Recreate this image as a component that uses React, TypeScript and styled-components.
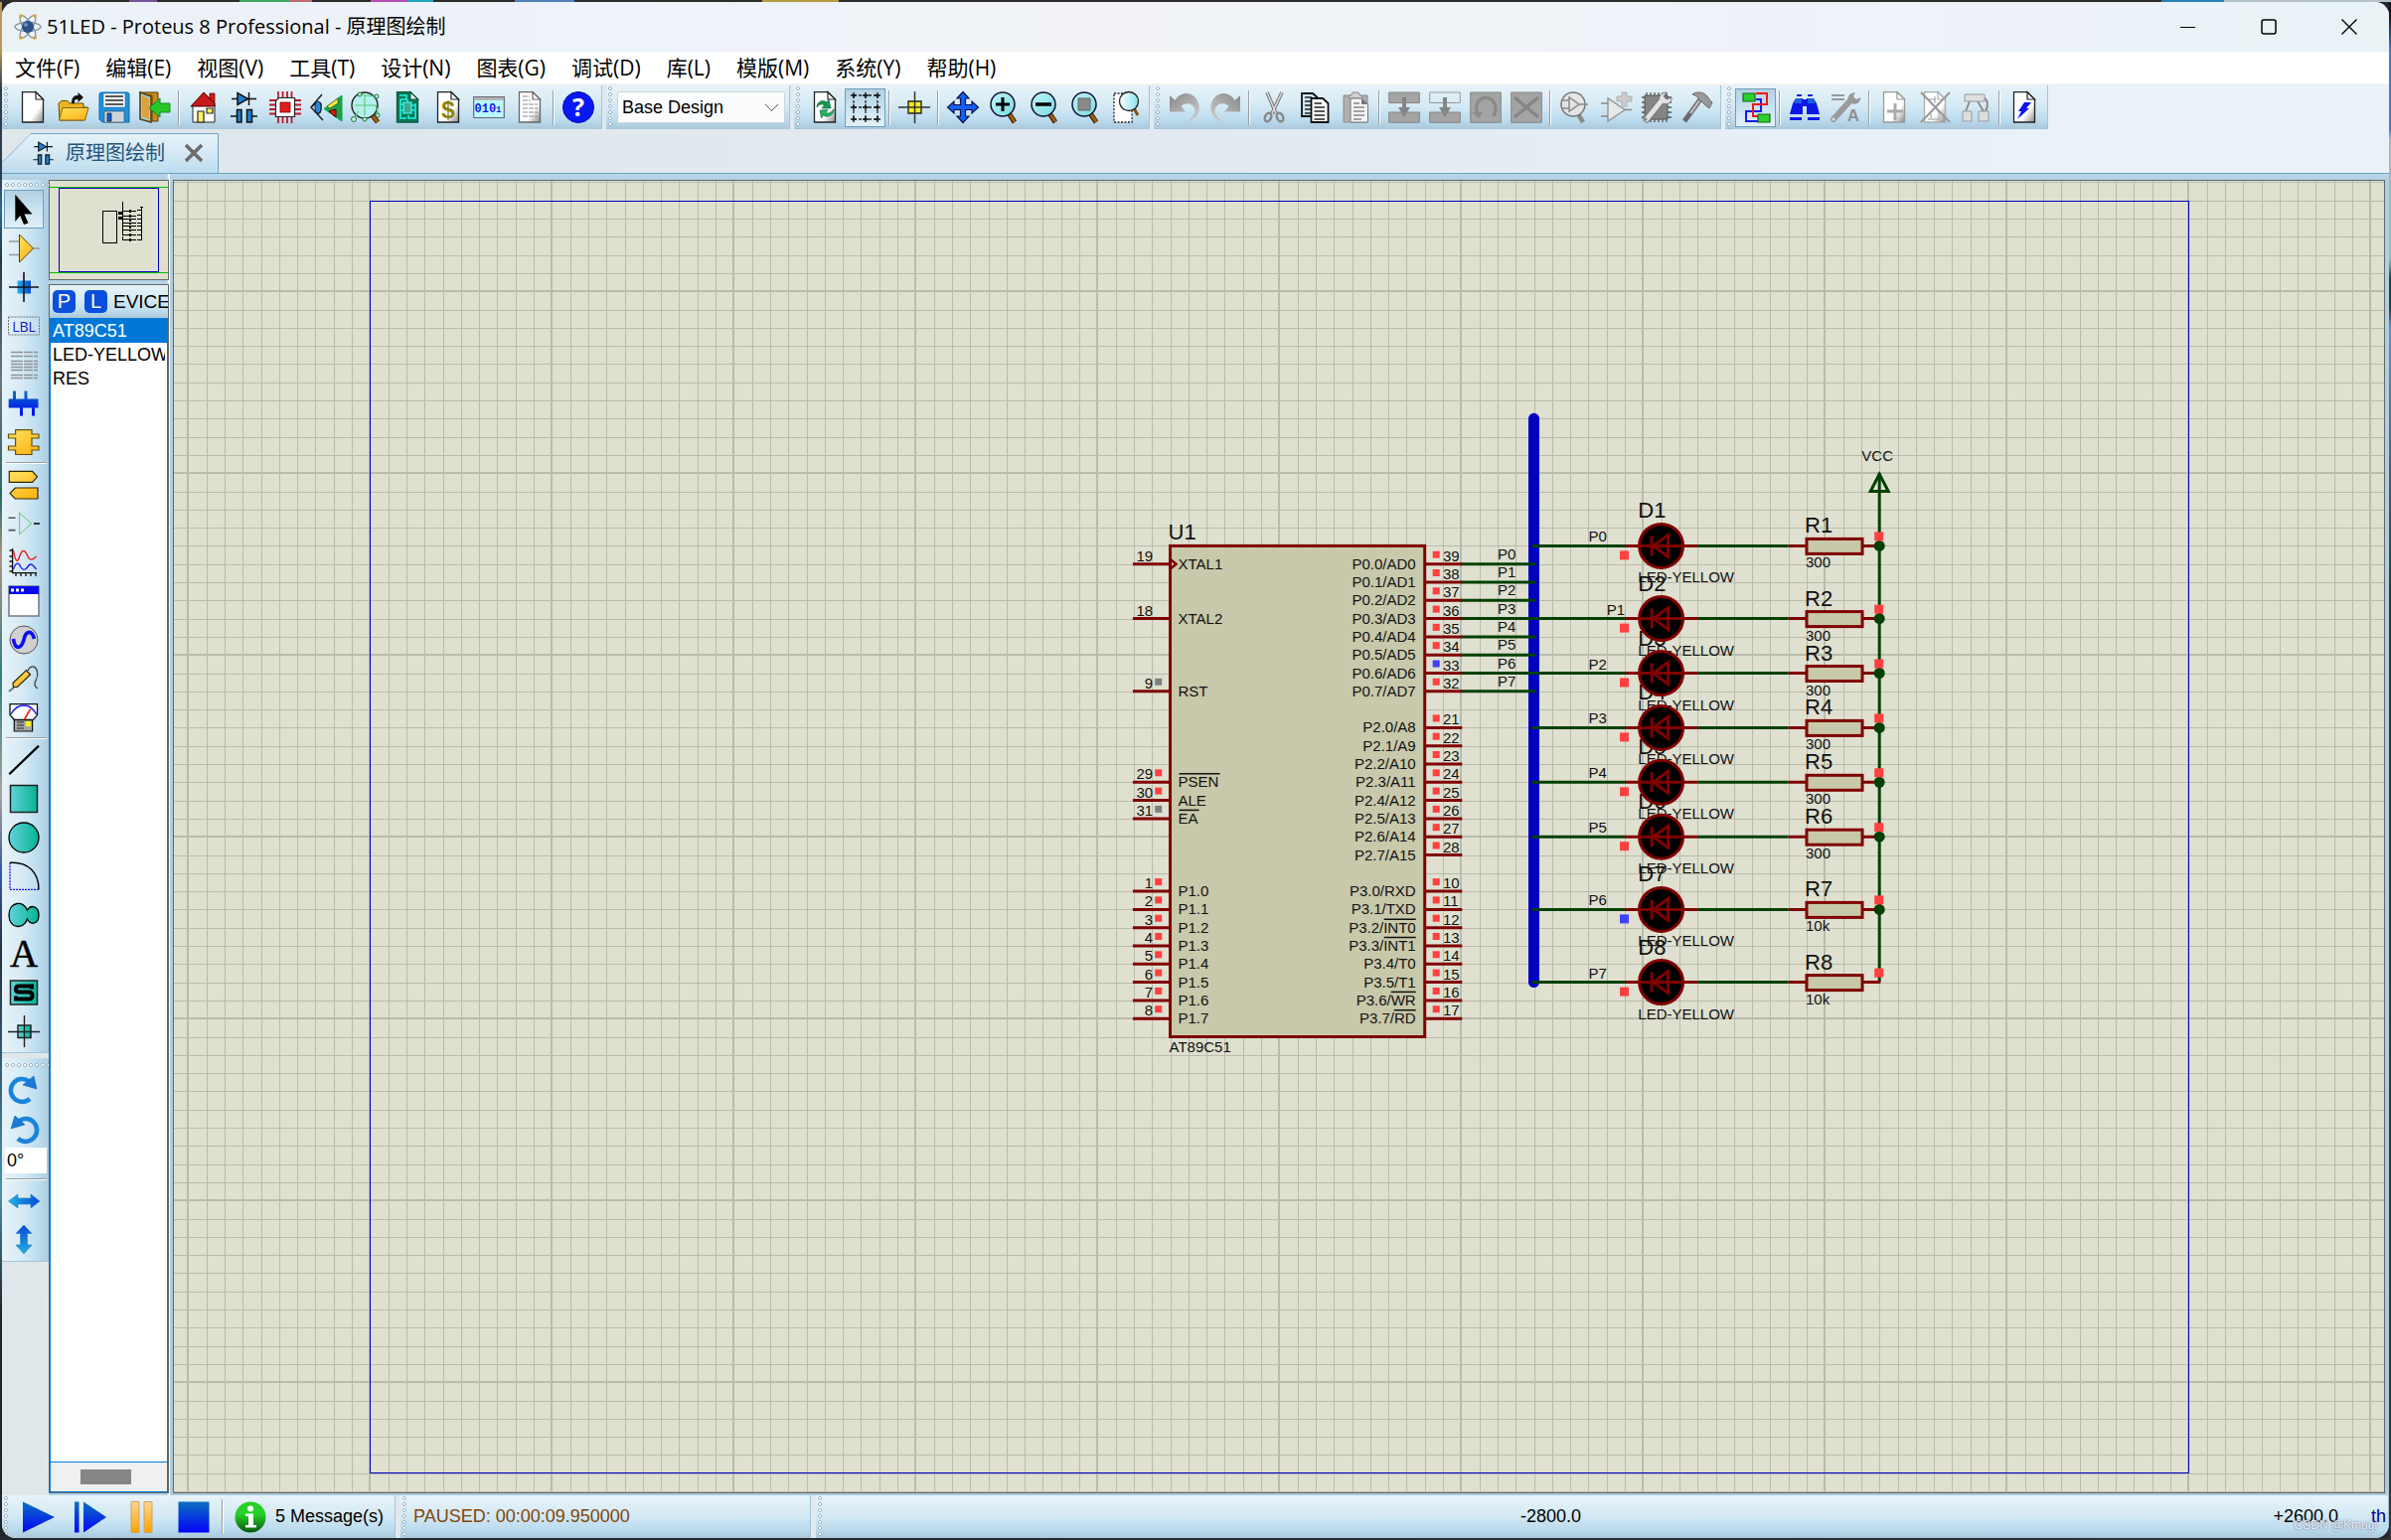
import React from "react";
import styled, { createGlobalStyle, css } from "styled-components";

const UI = `"Open Sans", "Noto Sans CJK SC", sans-serif`;
const SANS = `"Liberation Sans", "Noto Sans CJK SC", sans-serif`;
const BAR_V = "linear-gradient(180deg, #e7f3f9 0%, #d6eaf4 45%, #bcdcef 78%, #abc8da 100%)";
const BAR_H = "linear-gradient(90deg, #e7f3f9 0%, #d6eaf4 45%, #bcdcef 78%, #abcbdf 100%)";

const Global = createGlobalStyle`
  * { box-sizing: border-box; }
  body { margin: 0; font-family: ${SANS}; color: #000; }
  button, input, select { font: inherit; color: inherit; }
  svg { display: block; flex: none; }
`;

/* ---------- window frame ---------- */

const Desktop = styled.div`
  height: 100vh;
  padding: 2px;
  background:
    linear-gradient(90deg, #2c2c2c 0 130px, #7b4fa0 130px 158px, #2c2c2c 158px 241px, #3fa860 241px 291px, #c06a70 291px 314px,
      #2c2c2c 314px 373px, #b24fb0 373px 410px, #1fa5c0 410px 436px, #2c2c2c 436px 518px, #4f80b8 518px 578px,
      #2c2c2c 578px 767px, #b49b42 767px 844px, #2c2c2c 844px 2175px, #2b80b8 2175px 2238px, #b5c3ca 2238px 100%) top / 100% 2px no-repeat,
    linear-gradient(90deg, #262a2e, #303030) bottom / 100% 2px no-repeat,
    linear-gradient(180deg, #b89a50 0 50px, #2e3c50 90px 175px, #2b6a9a 210px, #1f3a44 260px, #6c7480 380px, #2a6a66 500px,
      #b09484 560px, #2f7f78 680px, #a8a4a0 800px, #3458a0 880px, #263040 960px, #4a90b0 1200px, #202428 1320px) left / 2px 100% no-repeat,
    linear-gradient(180deg, #10131c 0 16px, #4a78c8 50px 130px, #aab4c0 140px 260px, #2e3a48 280px 310px, #5f90c0 330px, #30353c 600px) right / 2px 100% no-repeat,
    #23262a;
`;

const Window = styled.div`
  height: 100%;
  display: flex;
  flex-direction: column;
  border-radius: 14px;
  overflow: hidden;
  background: linear-gradient(90deg, #dfe7eb, #e3e9f0 50%, #eaf1f9 85%);
`;

const TitleBar = styled.header`
  flex: none;
  height: 50px;
  display: flex;
  align-items: center;
  padding-left: 11px;
  font: 20px/28px ${UI};
  background: linear-gradient(90deg, #ebf2f6, #eef2fa 25%, #f1f3f6 45%, #eef2f9 80%, #e9f3f6);
`;

const Title = styled.h1`
  flex: 1;
  margin: 0;
  padding-left: 4px;
  font: inherit;
`;

const Caption = styled.button`
  width: 81px;
  height: 50px;
  padding: 0;
  border: 0;
  background: none;
  display: flex;
  align-items: center;
  justify-content: center;
`;

const MenuBar = styled.nav`
  flex: none;
  height: 32px;
  display: flex;
  align-items: center;
  gap: 26px;
  padding: 0 13px;
  background: #fff;
`;

const MenuItem = styled.button`
  border: 0;
  padding: 0;
  background: none;
  font: 21px/32px ${UI};
`;

/* ---------- tool bars ---------- */

const ToolRow = styled.div`
  flex: none;
  display: flex;
  gap: 4px;
  border-top: 2px solid #f2f2f0;
`;

const Group = styled.div`
  height: 44px;
  display: flex;
  align-items: center;
  padding-right: 3px;
  border-right: 1px solid #a3c4d8;
  background: ${BAR_V};
`;

const Grip = styled.i<{ $vertical?: boolean }>`
  flex: none;
  background: radial-gradient(circle at 3px 3px, #fff 1px, #9fb4c2 1px 2px, transparent 2px) 0 0 / 6px 6px;
  ${(p) =>
    p.$vertical
      ? css`width: 6px; align-self: stretch; margin: 0 3px 0 1px;`
      : css`height: 6px; align-self: stretch; margin: 2px 0;`}
`;

const Tool = styled.button<{ $on?: boolean; $side?: boolean }>`
  flex: none;
  width: ${(p) => (p.$side ? "40px" : "41px")};
  height: 39px;
  padding: 0;
  display: flex;
  align-items: center;
  justify-content: center;
  border: 1px solid transparent;
  background: none;
  ${(p) => p.$on && css`
    border-color: #6a9fbc;
    background: linear-gradient(180deg, #b3d0e2, #c5e0ef 40%, #e2f0f8);
  `}
`;

const Split = styled.i<{ $flat?: boolean }>`
  flex: none;
  ${(p) =>
    p.$flat
      ? css`width: 41px; height: 2px; margin: 1px 2px; background: linear-gradient(#9a9da0 50%, #fff 50%);`
      : css`width: 2px; height: 35px; margin: 0 3px; background: linear-gradient(90deg, #9a9da0 50%, #fff 50%);`}
`;

const Combo = styled.select`
  width: 169px;
  height: 32px;
  margin: 0 1px;
  padding: 0 4px;
  border: 1px solid #cfd3d6;
  border-radius: 2px;
  appearance: none;
  font-size: 18px;
  background:
    linear-gradient(45deg, transparent 44%, #555 44% 56%, transparent 56%) 148px 12px / 7px 7px no-repeat,
    linear-gradient(-45deg, transparent 44%, #555 44% 56%, transparent 56%) 154px 12px / 7px 7px no-repeat,
    #fbfcfd;
`;

/* ---------- tabs ---------- */

const TabRow = styled.div`
  flex: none;
  display: flex;
  padding-top: 4px;
`;

const Tab = styled.div`
  width: 218px;
  height: 40px;
  display: grid;
  grid-template-columns: 30px 24px 1fr 51px;
  align-items: center;
  color: #24557c;
  font: 20px/28px ${SANS};
  background: linear-gradient(180deg, #e6f3f9, #d3e8f4 55%, #bcdcee);
  clip-path: polygon(0 29px, 29px 0, 100% 0, 100% 100%, 0 100%);
  position: relative;
`;

const TabOutline = styled.svg`
  position: absolute;
  inset: 0;
`;

const TabName = styled.span`
  padding-left: 10px;
  white-space: nowrap;
`;

const CloseTab = styled.button`
  border: 0;
  padding: 0;
  background: none;
  display: flex;
  justify-content: center;
  position: relative;
`;

/* ---------- body ---------- */

const Body = styled.main`
  flex: 1;
  min-height: 0;
  display: flex;
  border-top: 1px solid #6aa3c2;
`;

const Side = styled.aside`
  flex: none;
  width: 47px;
  display: flex;
  flex-direction: column;
  gap: 5px;
  padding-top: 6px;
  background: linear-gradient(#b9d8ea, #b0d0e2) top / 100% 6px no-repeat;
`;

const SideGroup = styled.div<{ $top?: number }>`
  display: flex;
  flex-direction: column;
  align-items: flex-start;
  padding: ${(p) => p.$top ?? 0}px 0 2px 2px;
  border-bottom: 1px solid #a3c4d8;
  background: ${BAR_H};
`;

const Angle = styled.input`
  width: 42px;
  height: 26px;
  margin: 0 0 4px 1px;
  padding: 0 2px;
  border: 0;
  font-size: 18px;
  line-height: 24px;
`;

const Panels = styled.div`
  flex: none;
  width: 122px;
  display: flex;
  flex-direction: column;
  gap: 4px;
  padding: 6px 1px 2px 0;
  background: linear-gradient(90deg, #b4d4e6 119px, #fff 121px 100%);
`;

const Overview = styled.div`
  flex: none;
  height: 101px;
  border: 1px solid #666;
  background: #dfe0d0;
`;

const Devices = styled.section`
  flex: 1;
  min-height: 0;
  display: flex;
  flex-direction: column;
  border: 1px solid #666;
  background: #fff;
`;

const DevHead = styled.div`
  flex: none;
  height: 33px;
  display: flex;
  align-items: center;
  gap: 9px;
  padding-left: 3px;
  overflow: hidden;
  font-size: 19px;
  background: ${BAR_V};
`;

const Pick = styled.button`
  flex: none;
  width: 23px;
  height: 23px;
  padding: 0;
  border: 0;
  border-radius: 5px;
  background: #0a4fdc;
  color: #fff;
  font: 20px/23px ${SANS};
`;

const HeadName = styled.h2`
  margin: 0 0 0 -3px;
  font: inherit;
`;

const List = styled.ul`
  flex: 1;
  margin: 0;
  padding: 0 2px;
  list-style: none;
  border: 1px solid #0078d7;
  border-top: 0;
  font: 18px/24px ${SANS};
`;

const Item = styled.li<{ $on?: boolean }>`
  overflow: hidden;
  white-space: nowrap;
  ${(p) => p.$on && css`
    margin: 0 -2px;
    padding: 1px 2px 0;
    background: #0078d7;
    color: #fff;
  `}
`;

const Scroll = styled.div`
  flex: none;
  height: 30px;
  padding: 7px 36px 7px 30px;
  border: solid #0078d7;
  border-width: 0 1px 1px;
  background: #f0f0f0;
`;

const Thumb = styled.div`
  height: 15px;
  background: #868686;
`;

const CanvasWrap = styled.section`
  flex: 1;
  min-width: 0;
  padding: 6px 4px 2px 3px;
  background: linear-gradient(180deg, #b9d8ea, #b0d0e2 6px, #abcbdf);
`;

const Canvas = styled.div`
  height: 100%;
  overflow: hidden;
  border: 1px solid #666;
  background: #dfe0d0;
`;

/* ---------- status bar ---------- */

const Status = styled.footer`
  flex: none;
  height: 43px;
  display: flex;
  gap: 5px;
  font-size: 18px;
  position: relative;
`;

const StatusGroup = styled.div<{ $w?: string }>`
  display: flex;
  align-items: center;
  width: ${(p) => p.$w ?? "auto"};
  flex: ${(p) => (p.$w ? "none" : "1")};
  border-right: 1px solid #a3c4d8;
  background: ${BAR_V};
`;

const Run = styled.button`
  flex: none;
  width: 52px;
  height: 40px;
  padding: 0 0 0 2px;
  border: 0;
  background: none;
  display: flex;
  align-items: center;
  justify-content: center;
`;

const Messages = styled.button`
  padding: 0 0 0 8px;
  border: 0;
  background: none;
  display: flex;
  align-items: center;
  gap: 9px;
  white-space: nowrap;
`;

const Paused = styled.span`
  padding-left: 3px;
  color: #80460a;
`;

const Coords = styled.div`
  flex: 1;
  display: grid;
  grid-template-columns: 1fr 729px 15px;
  gap: 0 33px;
  text-align: right;
  padding-right: 2px;
`;

const Units = styled.span`
  color: #00008b;
`;

const Mark = styled.small`
  position: absolute;
  right: 12px;
  bottom: 5px;
  font: 12px/16px ${SANS};
  color: rgba(255, 255, 255, 0.85);
  text-shadow: 0 0 2px #557;
`;

/* ---------- icons ---------- */

const Glyph = styled.svg`
  overflow: visible;
`;

const Icon = ({ children, w = 32, h = 32, vb }: { children: React.ReactNode; w?: number; h?: number; vb?: string }) => (
  <Glyph width={w} height={h} viewBox={vb ?? `0 0 ${w} ${h}`} fill="none" aria-hidden="true">
    {children}
  </Glyph>
);

const Defs = () => (
  <defs>
    <linearGradient id="paper" x1="0.3" y1="0.3" x2="1" y2="1">
      <stop offset="0.5" stopColor="#fff" /><stop offset="1" stopColor="#888" />
    </linearGradient>
    <linearGradient id="gold" x1="0" y1="0" x2="0.6" y2="1">
      <stop offset="0" stopColor="#ffe25e" /><stop offset="1" stopColor="#fbb81c" />
    </linearGradient>
    <linearGradient id="blueV" x1="0" y1="0" x2="0" y2="1">
      <stop offset="0" stopColor="#0a70c0" /><stop offset="1" stopColor="#0404fa" />
    </linearGradient>
    <linearGradient id="blueH" x1="0" y1="0" x2="1" y2="0">
      <stop offset="0" stopColor="#22b0e8" /><stop offset="1" stopColor="#0848d8" />
    </linearGradient>
    <linearGradient id="blueUp" x1="0" y1="1" x2="0" y2="0">
      <stop offset="0" stopColor="#22b0e8" /><stop offset="1" stopColor="#0848d8" />
    </linearGradient>
    <linearGradient id="teal" x1="0" y1="0" x2="1" y2="0">
      <stop offset="0" stopColor="#5fd3d8" /><stop offset="1" stopColor="#08b294" />
    </linearGradient>
    <linearGradient id="grayG" x1="0" y1="0" x2="1" y2="1">
      <stop offset="0" stopColor="#888" /><stop offset="1" stopColor="#d0d0d0" />
    </linearGradient>
    <linearGradient id="lens" x1="0" y1="0" x2="1" y2="1">
      <stop offset="0" stopColor="#c0f4f6" /><stop offset="1" stopColor="#78dce4" />
    </linearGradient>
    <linearGradient id="green" x1="0" y1="0" x2="0" y2="1">
      <stop offset="0.4" stopColor="#28d028" /><stop offset="1" stopColor="#085810" />
    </linearGradient>
    <linearGradient id="amber" x1="0" y1="0" x2="0" y2="1">
      <stop offset="0" stopColor="#ffd890" /><stop offset="1" stopColor="#ffa000" />
    </linearGradient>
    <linearGradient id="lensFade" x1="0" y1="0" x2="1" y2="0">
      <stop offset="0" stopColor="#fff" /><stop offset="1" stopColor="#88e4ec" />
    </linearGradient>
  </defs>
);

const Sheet = ({ stroke = "#222", fill = "url(#paper)" }: { stroke?: string; fill?: string }) => (
  <>
    <path d="M5.500 .7H19L26.500 8V31H5.500Z" fill={fill} stroke={stroke} strokeWidth="1.3" />
    <path d="M19 .7V8H26.500Z" fill="#fff" stroke={stroke} strokeWidth="1.2" />
  </>
);

const DiodeCap = () => (
  <g stroke="#111" strokeWidth="1.5">
    <path d="M3 7.500H28" />
    <path d="M9 1.500V13.500L19.500 7.500Z" fill="#1a80d8" />
    <path d="M20.500 1V14M2 25H8M24 25H29" />
    <path d="M8.500 18.500H13V31H8.500ZM18.500 18.500H23.500V31H18.500Z" fill="#1a80d8" />
  </g>
);

const Lens = ({ children }: { children?: React.ReactNode }) => (
  <>
    <path d="M21 22L27 31" stroke="#3a2205" strokeWidth="5" />
    <path d="M21.500 22.500L27 30.500" stroke="#a5600e" strokeWidth="3" />
    <circle cx="15" cy="13" r="12" fill="url(#lens)" stroke="#113" strokeWidth="1.5" />
    {children}
  </>
);

const Refresh = () => (
  <>
    <path d="M8 16C8 10 14 8 18 11L20 8L22 17L13 17L15.500 14C13 12 10 13 8 16Z" fill="#1a9850" stroke="#064" strokeWidth=".6" />
    <path d="M25 18C25 24 19 27 14.500 24L12.500 27L11 19L19 18.500L17 21.500C20 23 23 21 25 18Z" fill="#27b060" stroke="#064" strokeWidth=".6" />
  </>
);

const UndoShape = () => (
  <path d="M1 4V20.500H17L12.500 15C18 9.500 26 13 26.500 19C26.500 24 22 28 17.500 31C27 28 32 22 30.500 14C28 .5 13-2 6.500 9Z" fill="url(#grayG)" />
);

const I: Record<string, React.ReactNode> = {
  newFile: <Icon><Sheet /></Icon>,
  open: (
    <Icon>
      <path d="M1 12L4 9.500H10L12 12H26V16H30L27 29H2Z" fill="#eeb420" stroke="#6b4d05" />
      <path d="M5 16.500H31L27.500 29H1.500Z" fill="url(#gold)" stroke="#8a6508" />
      <path d="M14 12C14 6 17 3.500 20.500 4V1L26 6L20.500 11V8C17.500 7.500 16.500 9 17 12Z" fill="#111" />
    </Icon>
  ),
  save: (
    <Icon>
      <path d="M1 3Q1 1 3 1H29Q31 1 31 3V31H4L1 28Z" fill="#2090dc" stroke="#146ab0" />
      <path d="M5 2H27V16H5Z" fill="#fff" stroke="#146ab0" strokeWidth=".6" />
      <path d="M7 5H25M7 9H25M7 13H25" stroke="#222" strokeWidth="1.3" />
      <path d="M6 20H26V31H6Z" fill="#cfd4d8" stroke="#245" strokeWidth=".6" />
      <path d="M9 22H13V30H9Z" fill="#1060e8" stroke="#222" strokeWidth=".8" />
    </Icon>
  ),
  exit: (
    <Icon>
      <path d="M1 1H19V30H13V4H1Z" fill="#c88a18" stroke="#5b3b04" />
      <path d="M1 1L12 5V31L1 28Z" fill="#9dd0dc" stroke="#5b3b04" strokeWidth="1.6" />
      <path d="M3 4L10 7V28L3 25.500Z" fill="#d9a23c" />
      <path d="M31 12H21V7L10 16.500L21 26V21H31Z" fill="#28c828" stroke="#148a20" />
    </Icon>
  ),
  home: (
    <Icon>
      <path d="M5 14H27V31H5Z" fill="#fff" stroke="#222" />
      <path d="M22 2H27V14H22Z" fill="#d81818" stroke="#400" strokeWidth=".7" />
      <path d="M3 15L16 1L27 12V15Z" fill="#c81818" stroke="#400" />
      <path d="M10 20H16V31H10ZM19 17H25V22H19Z" fill="#fff060" stroke="#222" strokeWidth="1.2" />
    </Icon>
  ),
  schematic: <Icon><DiodeCap /></Icon>,
  chip: (
    <Icon>
      <path d="M9 0V8M13.500 0V8M18 0V8M22.500 0V8M9 24V32M13.500 24V32M18 24V32M22.500 24V32M0 9H8M0 13.500H8M0 18H8M0 22.500H8M24 9H32M24 13.500H32M24 18H32M24 22.500H32" stroke="#c01828" strokeWidth="1.8" />
      <path d="M9.500 6.500H25.500V25.500H6.500V9.500Z" fill="#fff" stroke="#222" strokeWidth="1.2" />
      <path d="M11 11H21V21H11Z" fill="#e01c1c" stroke="#700" strokeWidth=".8" />
    </Icon>
  ),
  eye: (
    <Icon>
      <path d="M12 3L1 16L13 29M1 16Q12 6 11 16Q11 25 5 21" stroke="#222" strokeWidth="1.5" />
      <ellipse cx="8" cy="16" rx="3" ry="6" fill="#2a8ad8" stroke="#124" />
      <path d="M32 4V30L14 17.500Z" fill="#1ea04a" stroke="#0a4" />
      <path d="M17 15L28 7V12L20 17Z" fill="#f4ec30" stroke="#333" strokeWidth=".6" />
      <path d="M19 20L26 18V26Z" fill="#e01818" stroke="#500" />
    </Icon>
  ),
  probeMap: (
    <Icon>
      <path d="M21 23L27 31" stroke="#3a2205" strokeWidth="5" />
      <path d="M21 23L27 31" stroke="#a5600e" strokeWidth="3" />
      <circle cx="14" cy="14" r="13" fill="#b4f0ee" stroke="#222" strokeWidth="1.4" />
      <path d="M4 14H25M14 14V24M14 14V4L10 2M14 4L24 5M8 20L3 27M25 14L28 23" stroke="#58c878" strokeWidth="1.1" />
      <g stroke="#147838" fill="#c8f4e8"><circle cx="9" cy="3" r="2" /><circle cx="26" cy="5" r="2" /><circle cx="3" cy="28" r="2.500" /><circle cx="14" cy="28" r="2" /><circle cx="27" cy="24" r="2" /></g>
    </Icon>
  ),
  pcb: (
    <Icon>
      <Sheet fill="#0a7a50" stroke="#154" />
      <path d="M12 11H20V22H12Z" fill="#40a890" stroke="#4ff" strokeWidth="1.200" />
      <path d="M8 4H15V8H9V27H15M24 12V27H17V24M9 13H12M20 14H24M9 19H12M20 19H24M16 11V8" stroke="#20f0e0" strokeWidth="1.600" />
    </Icon>
  ),
  bill: <Icon><Sheet /><text x="16" y="27" fontFamily="Liberation Sans" fontWeight="700" fontSize="24" fill="#8a8400" textAnchor="middle">$</text></Icon>,
  binary: (
    <Icon>
      <path d="M.7 5.500H31.300V26.500H.7Z" fill="#b8fbfd" stroke="#667" strokeWidth="1.200" />
      <path d="M1 6H31V9H1Z" fill="#b4b4b4" />
      <text x="1.500" y="21" fontFamily="Liberation Mono" fontWeight="700" fontSize="12" fill="#1818f0">010<tspan fontSize="9">1</tspan></text>
    </Icon>
  ),
  report: (
    <Icon>
      <Sheet stroke="#666" />
      <path d="M9 5H16M9 9H17M9 13H24M9 17H24M9 21H24M9 25H24" stroke="#888" strokeWidth="1.200" strokeDasharray="5 1" />
    </Icon>
  ),
  help: (
    <Icon>
      <circle cx="16" cy="16" r="15.500" fill="#0818f4" stroke="#0508b0" />
      <text x="16" y="25" fontFamily="Open Sans" fontWeight="700" fontSize="25" fill="#fff" textAnchor="middle">?</text>
    </Icon>
  ),
  redraw: <Icon><Sheet /><Refresh /></Icon>,
  grid: (
    <Icon>
      <path d="M4 4H28M4 16H28M4 28H28M4 4V28M16 4V28M28 4V28" stroke="#222" strokeWidth="1.300" strokeDasharray="3 2" />
      <path d="M1 4H7M13 4H19M25 4H31M1 16H7M13 16H19M25 16H31M1 28H7M13 28H19M25 28H31M4 1V7M16 1V7M28 1V7M4 13V19M16 13V19M28 13V19M4 25V31M16 25V31M28 25V31" stroke="#111" strokeWidth="1.400" />
    </Icon>
  ),
  origin: (
    <Icon>
      <path d="M10 10H23V22H10Z" fill="#ffec18" stroke="#222" strokeWidth="1.400" />
      <path d="M0 16H32M16.500 0V32" stroke="#333" strokeWidth="1.500" />
    </Icon>
  ),
  pan: <Icon><path d="M16 .5L22 7H18.500V13.500H25V10L31.500 16L25 22V18.500H18.500V25H22L16 31.500L10 25H13.500V18.500H7V22L.5 16L7 10V13.500H13.500V7H10Z" fill="#1460f4" stroke="#0a1050" strokeWidth="1.200" /></Icon>,
  zoomIn: <Icon><Lens><path d="M8 13H22M15 6V20" stroke="#000" strokeWidth="3" /></Lens></Icon>,
  zoomOut: <Icon><Lens><path d="M7 13H23" stroke="#000" strokeWidth="3.500" /></Lens></Icon>,
  zoomAll: <Icon><Lens><path d="M9 7H21V19H9Z" fill="#8a8a8a" stroke="#666" /></Lens></Icon>,
  zoomArea: (
    <Icon>
      <path d="M4 2H22V31H4Z" fill="#fff" stroke="#222" strokeWidth="1.300" strokeDasharray="2 1.500" />
      <path d="M24 17L28 24" stroke="#8a4f0c" strokeWidth="3" />
      <circle cx="19" cy="10" r="9.500" fill="url(#lensFade)" stroke="#222" strokeWidth="1.300" />
    </Icon>
  ),
  undo: <Icon><UndoShape /></Icon>,
  redo: <Icon><g transform="translate(32 0) scale(-1 1)"><UndoShape /></g></Icon>,
  cut: (
    <Icon>
      <path d="M9 1L18 22M24 1L14 22" stroke="#777" strokeWidth="3.500" />
      <path d="M9 1L18 22M24 1L14 22" stroke="#ddd" strokeWidth="1.500" />
      <ellipse cx="10" cy="26" rx="3" ry="4.500" stroke="#888" strokeWidth="2.500" transform="rotate(25 10 26)" />
      <ellipse cx="22" cy="26" rx="3" ry="4.500" stroke="#888" strokeWidth="2.500" transform="rotate(-25 22 26)" />
    </Icon>
  ),
  copy: (
    <Icon>
      <path d="M3 2H14L18.500 6V25H3Z" fill="#cfe4f4" stroke="#111" strokeWidth="1.800" />
      <path d="M6 6H13M6 10H13M6 14H12M6 18H12M6 22H12" stroke="#222" strokeWidth="1.300" />
      <path d="M12.500 7H24L29.500 12V31H12.500Z" fill="#fff" stroke="#111" strokeWidth="1.800" />
      <path d="M15.500 12H23M15.500 16H26M15.500 20H26M15.500 24H26M15.500 28H26" stroke="#222" strokeWidth="1.300" />
    </Icon>
  ),
  paste: (
    <Icon>
      <path d="M4 4H28V31H4Z" fill="#b0b0b0" stroke="#8a8a8a" />
      <path d="M9 5Q12 5 13 1H19Q20 5 23 5V7H9Z" fill="#d0d0d0" stroke="#888" />
      <path d="M11 7H22L28.500 13V31H11Z" fill="#f4f4f4" stroke="#777" />
      <path d="M22 7V13H28.500Z" fill="#777" />
      <path d="M14 12H20M14 16H25M14 20H25M14 24H25M14 28H22" stroke="#888" strokeWidth="1.300" />
    </Icon>
  ),
  blockCopy: (
    <Icon>
      <path d="M.7 1H31.300V11.500H.7ZM.7 21H31.300V31.300H.7Z" fill="#a4a4a4" stroke="#858585" />
      <path d="M14 6H18V16H22L16 26L10 16H14Z" fill="#858585" />
    </Icon>
  ),
  blockMove: (
    <Icon>
      <path d="M.7 1H31.300V11.500H.7Z" stroke="#999" /><path d="M.7 21H31.300V31.300H.7Z" fill="#a4a4a4" stroke="#858585" />
      <path d="M14 6H18V16H22L16 26L10 16H14Z" fill="#858585" />
    </Icon>
  ),
  blockRotate: (
    <Icon>
      <path d="M.7 1H31.300V31.300H.7Z" fill="#a4a4a4" stroke="#858585" />
      <path d="M8 22C4 14 9 6.500 16 6.500C24 6.500 29 15 24 25" stroke="#8a8a8a" strokeWidth="3.500" />
      <path d="M2 21H13L9 27Z" fill="#8a8a8a" />
    </Icon>
  ),
  blockDelete: (
    <Icon>
      <path d="M.7 1H31.300V31.300H.7Z" fill="#a4a4a4" stroke="#858585" />
      <path d="M4 6L28 26M28 6L4 26" stroke="#868686" strokeWidth="3.500" />
    </Icon>
  ),
  pickPart: (
    <Icon>
      <path d="M19 23L24 31" stroke="#888" strokeWidth="4.500" />
      <circle cx="14" cy="13" r="12" fill="#e2e4e5" stroke="#777" strokeWidth="1.500" />
      <path d="M10 6V20L20 13ZM2 9H10M2 17H10M20 13H29" stroke="#888" strokeWidth="1.500" />
    </Icon>
  ),
  makePart: (
    <Icon>
      <path d="M8 7V30L25 18.500Z" fill="#e8e8e8" stroke="#999" strokeWidth="1.500" />
      <path d="M1 12H8M1 25H8M25 18.500H32" stroke="#888" strokeWidth="1.500" />
      <path d="M22 1H27V5H32V10H27V15H22V10H17V5H22Z" fill="#ccc" stroke="#aaa" strokeWidth=".8" />
    </Icon>
  ),
  packaging: (
    <Icon>
      <path d="M6 1V31M10 1V31M14 1V31M18 1V31M22 1V31M26 1V31M1 6H31M1 11H31M1 16H31M1 21H31M1 26H31" stroke="#555" strokeWidth="1.300" />
      <path d="M4 4H27V28H4Z" fill="#858585" stroke="#555" />
      <path d="M6 28L22 8" stroke="#777" strokeWidth="7" strokeLinecap="round" />
      <path d="M19 11C17 5 21 1 26 1L23 5L26 8L31 6C32 11 27 14 22 12Z" fill="#e2e2e2" stroke="#777" />
      <path d="M6 28L22 8" stroke="#e2e2e2" strokeWidth="5" strokeLinecap="round" />
      <circle cx="5" cy="28" r="1.500" fill="#888" />
    </Icon>
  ),
  hammer: (
    <Icon>
      <path d="M3 30L19 8" stroke="#6a6a6a" strokeWidth="5" /><path d="M9 22L19 8" stroke="#b8b8b8" strokeWidth="2.500" />
      <path d="M11 3C15 0 22 0 26 5C28 8 29 9 31 11L28 17L24 14C22 12 21 10 18 9C17 6 15 4 11 3Z" fill="#999" stroke="#666" />
    </Icon>
  ),
  autoRoute: (
    <Icon>
      <path d="M16 8H21V20H6V30H20" stroke="#1818f0" strokeWidth="2" />
      <path d="M16 2H27V13H13V25H20" stroke="#f01818" strokeWidth="2" />
      <path d="M3 2H15V10H3ZM18 23H30V31H18Z" fill="#2ad02a" stroke="#156815" strokeWidth="1.200" />
    </Icon>
  ),
  find: (
    <Icon>
      <path d="M8 3H13V5H8ZM19 3H24V5H19ZM7 7H14V23H1L4 12ZM25 7H18V23H31L28 12ZM14 8H18V15H14ZM1 26H13V29H1ZM19 26H31V29H19Z" fill="#0c18e8" />
      <path d="M7 7H13V12H5ZM19 7H25L27 12H19Z" fill="#1860e0" />
    </Icon>
  ),
  props: (
    <Icon>
      <path d="M2 3H15V5H2ZM2 7H15V9H2Z" fill="#999" />
      <path d="M4 28L22 8" stroke="#9a9a9a" strokeWidth="6" strokeLinecap="round" />
      <circle cx="4" cy="28" r="1.500" fill="#ddd" />
      <path d="M19 11C17 5 21 1 26 1L24 5L27 8L31 6C32 11 27 14 22 12Z" fill="#9a9a9a" />
      <text x="24" y="30" fontFamily="Liberation Sans" fontWeight="700" fontSize="17" fill="#909090" textAnchor="middle">A</text>
    </Icon>
  ),
  newSheet: <Icon><Sheet stroke="#999" /><path d="M9 20H25M17 12V29" stroke="#aaa" strokeWidth="3" /></Icon>,
  delSheet: (
    <Icon>
      <Sheet stroke="#aaa" />
      <path d="M10 8H17M16 5V12M9 28H24M12 22V28M20 18V28" stroke="#bbb" strokeWidth="1.500" />
      <path d="M2 1L31 31M31 1L2 31" stroke="#999" strokeWidth="2" />
    </Icon>
  ),
  parent: (
    <Icon>
      <path d="M10 10L6 20M18 10L24 20M22 5C29 8 29 14 26 20" stroke="#8c8c8c" strokeWidth="2" />
      <path d="M5 3H25V10H5ZM3 20H12V30H3ZM19 20H29V30H19Z" fill="#dedede" stroke="#999" />
    </Icon>
  ),
  erc: <Icon><Sheet /><path d="M16 11H23L18 17H21L9 28L13 20H10Z" fill="#1010f4" /></Icon>,

  /* side tools */
  select: <Icon><path d="M7.300 .7V28L12.300 22L16 31L20.500 29.500L16.500 20.500H24.500Z" fill="#000" /></Icon>,
  component: <Icon><path d="M1 9H11M1 22.500H11M25 16H32" stroke="#999" strokeWidth="1.500" /><path d="M11.500 2V30L25.500 16Z" fill="url(#gold)" stroke="#554010" /></Icon>,
  junction: <Icon><path d="M9.500 9.500H23V22.500H9.500Z" fill="url(#blueH)" /><path d="M1 16H31M16 1V31" stroke="#111" strokeWidth="1.600" /></Icon>,
  label: (
    <Icon>
      <path d="M.5 7H31.500V25H.5Z" stroke="#777" strokeDasharray="2 1" />
      <text x="16" y="21.500" fontFamily="Open Sans" fontSize="14" fill="#1414c8" textAnchor="middle">LBL</text>
    </Icon>
  ),
  script: <Icon><path d="M3 3.500H30M3 7.500H30M3 12.500H30M3 15.500H30M3 18.500H30M3 21.500H30M3 26.500H30M3 29.500H30" stroke="#8e9498" strokeWidth="1.300" strokeDasharray="12 1 9 1" /></Icon>,
  bus: <Icon><path d="M.7 11.500H5V3.500H8V11.500H16.500V3.500H19.500V11.500H30.500V20.500H27V28.500H24V20.500H15V28.500H12V20.500H.7Z" fill="url(#blueV)" /></Icon>,
  subckt: <Icon><path d="M7.600 3.600H24V8H31V12H24V20H31V24H24V28.500H7.600V24H.5V20H7.600V12H.5V8H7.600Z" fill="url(#gold)" stroke="#665010" strokeWidth="1.200" /></Icon>,
  terminal: <Icon><path d="M1.300 2.300H24.600L29.500 7.800L24.600 13.300H1.300ZM30 19H7.300L2 24.600L7.300 30H30Z" fill="url(#gold)" stroke="#332808" strokeWidth="1.200" /></Icon>,
  pin: <Icon><path d="M.5 10.300H7.500M.5 22.600H7.500" stroke="#555" strokeWidth="1.600" /><path d="M26 16H32" stroke="#000" strokeWidth="1.500" /><path d="M11.600 5V27L23.600 16Z" stroke="#60cc68" /></Icon>,
  graph: (
    <Icon>
      <path d="M4.600 2V26.600H29M1.500 4H4M1.500 10H4M1.500 15H4M1.500 20H4M1.500 25H4M8 27V30M13 27V30M18 27V30M23 27V30M28 27V30" stroke="#111" strokeWidth="1.300" />
      <path d="M5.500 4C8 18 10 16 12 9C15 1 18 5 20 10C23 16 26 12 28.600 10" stroke="#e81818" strokeWidth="1.400" />
      <path d="M5.500 23C8 15 11 16 13 21C16 26 19 22 21 19C24 16 26 20 28.600 23" stroke="#1818f0" strokeWidth="1.400" />
    </Icon>
  ),
  tape: <Icon><path d="M1 1H31V31H1Z" fill="#fff" stroke="#778" strokeWidth="1.500" /><path d="M1 1H31V9H1Z" fill="#0808f0" /><path d="M3 5H6M8 5H11M13 5H16" stroke="#fff" strokeWidth="3" /></Icon>,
  generator: <Icon><circle cx="16" cy="16" r="14" fill="#d0d0d0" stroke="#555" /><path d="M5.500 15C7 26 13 26 16 16C18 6 24 6 26.500 15" stroke="#0c0cf4" strokeWidth="3.600" /></Icon>,
  probe: (
    <Icon>
      <path d="M1 29L7 24" stroke="#777" strokeWidth="2" />
      <path d="M5 20.500L18.500 7.500L22.500 12L9.500 24.500L5.500 24.500Z" fill="url(#gold)" stroke="#222" strokeWidth="1.200" />
      <path d="M20 8C23 2 28 3 29.500 9C31 16 27 18 27 21C27 23 28 25 30 26" stroke="#444" strokeWidth="1.300" />
    </Icon>
  ),
  meter: (
    <Icon>
      <path d="M2 2.600H29.500V13.600L25.500 18.300H6.300L2 13.600Z" fill="#fff" stroke="#111" strokeWidth="1.300" />
      <path d="M3 13Q8 4 16 4Q24 4 28.500 13" stroke="#1818f0" strokeWidth="1.400" />
      <path d="M22.600 7.600L16.600 18" stroke="#f01818" strokeWidth="1.600" />
      <path d="M6.300 18.600H24.600V30H6.300Z" fill="#a8a8a8" stroke="#111" strokeWidth="1.200" />
      <path d="M9 21H16M9 24H16M9 27H16" stroke="#222" strokeWidth="1.200" /><path d="M18 20H23V25H18Z" fill="#fff018" />
    </Icon>
  ),
  line: <Icon><path d="M1.300 30.300L31 1.600" stroke="#000" strokeWidth="2.200" /></Icon>,
  box: <Icon><path d="M2.500 2.500H29.500V29.500H2.500Z" fill="url(#teal)" stroke="#222" strokeWidth="1.500" /></Icon>,
  circle: <Icon><circle cx="16" cy="16" r="15" fill="url(#teal)" stroke="#000" strokeWidth="1.300" /></Icon>,
  arc: <Icon><path d="M2 2.300V29.300H31" stroke="#1414e0" strokeWidth="1.300" strokeDasharray="2 1" /><path d="M2 2.300C20 1 31 12 31 29.300" stroke="#000" strokeWidth="1.400" /></Icon>,
  path: <Icon><path d="M19.500 11C16 1 1 2 1 16C1 30 16 31 19.500 20C23 27 31 25 31 16C31 7 23 5 19.500 11Z" fill="url(#teal)" stroke="#000" strokeWidth="1.300" /></Icon>,
  text: <Icon><text x="16" y="29" fontFamily="Liberation Serif" fontSize="39" fill="#000" stroke="#000" strokeWidth=".5" textAnchor="middle">A</text></Icon>,
  symbol: <Icon><path d="M2.500 4H29.500V28H2.500Z" fill="url(#teal)" stroke="#222" strokeWidth="1.500" /><path d="M24 12.500V9.500H11Q8 9.500 8 12.500Q8 15.500 11 15.500H21Q24.500 15.500 24.500 19Q24.500 22.500 21 22.500H8V19.500" stroke="#000" strokeWidth="4" /></Icon>,
  marker: <Icon><path d="M10 10H23V22.500H10Z" fill="url(#teal)" stroke="#222" strokeWidth="1.500" /><path d="M0 16.500H32M16.500 0V32" stroke="#222" strokeWidth="1.400" /></Icon>,
  cw: (
    <Icon>
      <path d="M22 25A11.500 11.500 0 1 1 21 7" stroke="#1a84dc" strokeWidth="4.500" />
      <path d="M15 11L26 2L29 15Z" fill="#1a78d8" stroke="#1060b0" strokeWidth=".6" />
    </Icon>
  ),
  ccw: (
    <Icon>
      <path d="M10 26A11.500 11.500 0 1 0 11 8" stroke="#1a84dc" strokeWidth="4.500" />
      <path d="M17 12L7 3L3 16Z" fill="#1a78d8" stroke="#1060b0" strokeWidth=".6" />
    </Icon>
  ),
  flipH: <Icon><path d="M.5 16L10 9V13H23V9L32 16L23 23V19H10V23Z" fill="url(#blueH)" stroke="#2a80b0" strokeWidth=".6" /></Icon>,
  flipV: <Icon><path d="M16 1L24 9.500H19.500V21H24L16 30L8 21H12.500V9.500H8Z" fill="url(#blueUp)" stroke="#2a80b0" strokeWidth=".6" /></Icon>,
};

const toolGroups: { name: string; items: string[] }[] = [
  { name: "view", items: ["redraw", "grid*", "|", "origin", "|", "pan", "zoomIn", "zoomOut", "zoomAll", "zoomArea"] },
  {
    name: "edit",
    items: ["undo", "redo", "|", "cut", "copy", "paste", "|", "blockCopy", "blockMove", "blockRotate", "blockDelete", "|", "pickPart", "makePart", "packaging", "hammer"],
  },
  { name: "design", items: ["autoRoute*", "|", "find", "props", "|", "newSheet", "delSheet", "parent", "|", "erc"] },
];
const fileTools = ["newFile", "open", "save", "exit", "|", "home", "schematic", "chip", "eye", "probeMap", "pcb", "bill", "binary", "report", "|", "help"];
const sideTools = [
  "select*", "component", "junction", "label", "script", "bus", "subckt", "|",
  "terminal", "pin", "graph", "tape", "generator", "probe", "meter", "|",
  "line", "box", "circle", "arc", "path", "text", "symbol", "marker",
];

const Tools = ({ items, side }: { items: string[]; side?: boolean }) => (
  <>
    {items.map((raw, i) => {
      if (raw === "|") return <Split key={i} $flat={side} />;
      const on = raw.endsWith("*");
      const id = on ? raw.slice(0, -1) : raw;
      return <Tool key={i} $on={on} $side={side} aria-label={id} aria-pressed={on}>{I[id]}</Tool>;
    })}
  </>
);

/* ---------- schematic ---------- */

const STEP = 18.3;
const X = (i: number) => 197.3 + STEP * i;
const Y = (j: number) => 19.7 + STEP * j;
const RED = "#ff4040";
const BLUE = "#4040ff";
const GRAY = "#808080";
const BODY = "#800000";
const WIRE = "#004000";

const SchText = styled.text<{ $big?: boolean }>`
  font-family: ${SANS};
  font-size: ${(p) => (p.$big ? "22px" : "15px")};
  fill: #111;
`;

type Pin = { j: number; no: number; pre?: string; bar?: string; dot?: string };
const run = (j: number, no: number, names: string[]): Pin[] => names.map((pre, k) => ({ j: j + k, no: no + k, pre, dot: RED }));

const leftPins: Pin[] = [
  { j: 20, no: 19, pre: "XTAL1" },
  { j: 23, no: 18, pre: "XTAL2" },
  { j: 27, no: 9, pre: "RST", dot: GRAY },
  { j: 32, no: 29, bar: "PSEN", dot: RED },
  { j: 33, no: 30, pre: "ALE", dot: RED },
  { j: 34, no: 31, bar: "EA", dot: GRAY },
  ...run(38, 1, ["P1.0", "P1.1", "P1.2", "P1.3", "P1.4", "P1.5", "P1.6", "P1.7"]),
];
const rightPins: Pin[] = [
  ...[0, 1, 2, 3, 4, 5, 6, 7].map((k) => ({ j: 20 + k, no: 39 - k, pre: `P0.${k}/AD${k}`, dot: k === 6 ? BLUE : RED })),
  ...run(29, 21, ["P2.0/A8", "P2.1/A9", "P2.2/A10", "P2.3/A11", "P2.4/A12", "P2.5/A13", "P2.6/A14", "P2.7/A15"]),
  ...run(38, 10, ["P3.0/RXD", "P3.1/TXD", "P3.2/", "P3.3/", "P3.4/T0", "P3.5/T1", "P3.6/", "P3.7/"]).map((p) => ({
    ...p,
    bar: ({ 12: "INT0", 13: "INT1", 16: "WR", 17: "RD" } as Record<number, string>)[p.no],
  })),
];
const barWidth: Record<string, number> = { PSEN: 41, EA: 20, INT0: 32, INT1: 32, WR: 25, RD: 22 };

const rows = [19, 23, 26, 29, 32, 35, 39, 43].map((j, k) => ({ j, k, value: k < 6 ? "300" : "10k" }));

const GridLines = () => {
  const lines: React.ReactNode[] = [];
  for (let i = -10; i < 220; i++) {
    const major = i % 10 === 0;
    lines.push(<rect key={`v${i}`} x={Math.round(X(i) - (major ? 1 : 0))} y="0" width={major ? 2 : 1} height="100%" />);
  }
  for (let j = -1; j < 130; j++) {
    const major = (j - 5) % 10 === 0;
    lines.push(<rect key={`h${j}`} x="0" y={Math.round(Y(j) - (major ? 1 : 0))} width="100%" height={major ? 2 : 1} />);
  }
  return <g fill="#b9bbab" shapeRendering="crispEdges">{lines}</g>;
};

const Schematic = () => (
  <svg width="100%" height="100%" fill="none" role="img" aria-label="51LED">
    <Defs />
    <GridLines />
    <rect x="197.500" y="20.500" width="1830" height="1280" stroke="#0000c0" />

    <path d={`M${X(64)} ${Y(12)}V${Y(43)}`} stroke="#0000c0" strokeWidth="11" strokeLinecap="round" />
    <g stroke={WIRE} strokeWidth="3">
      {[20, 21, 22, 23, 24, 25, 26, 27].map((j) => <path key={j} d={`M${X(60)} ${Y(j)}H${X(64) + 2}`} />)}
      {rows.map(({ j }) => <path key={j} d={`M${X(64) - 2} ${Y(j)}H${X(69)}M${X(73)} ${Y(j)}H${X(78)}`} />)}
      <path d={`M${X(83)} ${Y(15)}V${Y(43)}`} />
      <path d={`M${X(83)} ${Y(15) + 1}L${X(83) - 9} ${Y(16)}H${X(83) + 9}Z`} />
    </g>

    <rect x={X(44)} y={Y(19)} width={STEP * 14} height={STEP * 27} fill="#c8c8aa" stroke={BODY} strokeWidth="3" />
    <path d={`M${X(44)} ${Y(20) - 5}L${X(44) + 6} ${Y(20)}L${X(44)} ${Y(20) + 5}`} stroke={BODY} strokeWidth="2.500" />
    <SchText $big x={X(44) - 2} y={Y(19) - 6}>U1</SchText>
    <SchText x={X(44) - 1} y={Y(46) + 15}>AT89C51</SchText>

    {leftPins.map((p) => (
      <g key={p.no}>
        <path d={`M${X(42) - 1} ${Y(p.j)}H${X(44)}`} stroke={BODY} strokeWidth="3" />
        <SchText x={X(43) + 1} y={Y(p.j) - 3} textAnchor="end">{p.no}</SchText>
        <SchText x={X(44) + 8} y={Y(p.j) + 5}>{p.pre}{p.bar}</SchText>
        {p.bar && <path d={`M${X(44) + 9} ${Y(p.j) - 8.5}h${barWidth[p.bar]}`} stroke="#111" strokeWidth="1.500" />}
        {p.dot && <rect x={X(43) + 3} y={Y(p.j) - 13} width="7" height="7" fill={p.dot} />}
      </g>
    ))}
    {rightPins.map((p) => (
      <g key={p.no}>
        <path d={`M${X(58)} ${Y(p.j)}H${X(60) + 1}`} stroke={BODY} strokeWidth="3" />
        <SchText x={X(59)} y={Y(p.j) - 3}>{p.no}</SchText>
        <SchText x={X(58) - 9} y={Y(p.j) + 5} textAnchor="end">{p.pre}{p.bar}</SchText>
        {p.bar && <path d={`M${X(58) - 9} ${Y(p.j) - 8.5}h${-barWidth[p.bar]}`} stroke="#111" strokeWidth="1.500" />}
        <rect x={X(58) + 8} y={Y(p.j) - 13} width="7" height="7" fill={p.dot} />
      </g>
    ))}
    {[0, 1, 2, 3, 4, 5, 6, 7].map((k) => <SchText key={k} x={X(62)} y={Y(20 + k) - 5}>P{k}</SchText>)}

    {rows.map(({ j, k, value }) => (
      <g key={k}>
        <SchText x={X(k === 1 ? 68 : 67)} y={Y(j) - 4}>P{k}</SchText>
        <SchText $big x={X(70) - 5} y={Y(j) - 28}>D{k + 1}</SchText>
        <SchText x={X(70) - 5} y={Y(j) + 37}>LED-YELLOW</SchText>
        <SchText $big x={X(79) - 2} y={Y(j) - 13}>R{k + 1}</SchText>
        <SchText x={X(79) - 1} y={Y(j) + 22}>{value}</SchText>
      </g>
    ))}
    {rows.map(({ j, k }) => (
      <g key={k} stroke={BODY} strokeWidth="3">
        <circle cx={X(71)} cy={Y(j)} r="22" fill="#000" />
        <path d={`M${X(69)} ${Y(j)}H${X(73)}M${X(71) - 9.500} ${Y(j) - 10}v20M${X(71) + 7} ${Y(j) - 11}v22l-15 -11Z`} />
        <path d={`M${X(78)} ${Y(j)}H${X(79)}M${X(82)} ${Y(j)}H${X(83) + 1}`} />
        <rect x={X(79)} y={Y(j) - 7} width="56" height="15" fill="#c8c8aa" />
        <rect x={X(69) - 5} y={Y(j) + 5} width="9" height="9" fill={k === 6 ? BLUE : RED} stroke="none" />
        {k < 7 && <circle cx={X(83)} cy={Y(j)} r="5.500" fill={WIRE} stroke="none" />}
        <rect x={X(83) - 5} y={Y(j) - 14} width="9" height="9" fill={RED} stroke="none" />
      </g>
    ))}
    <SchText x={X(83) - 2} y={Y(14) + 6} textAnchor="middle">VCC</SchText>
  </svg>
);

const MiniMap = () => (
  <svg width="119" height="99" viewBox="0 0 119 99" fill="none" shapeRendering="crispEdges" aria-hidden="true">
    <path d="M0 6.500H119M0 92.500H119" stroke="#00c000" />
    <rect x="9.500" y="7.500" width="100" height="84" stroke="#0000c0" />
    <rect x="53.500" y="30.500" width="14" height="32" stroke="#000" />
    <path d="M73.500 21V54M73.500 56V60M92.500 26V60M91 26.500H94M69 32H73M69 36.500H73" stroke="#000" />
    <path d="M69 32.500H73M69 37H73" stroke="#000" strokeWidth="3" />
    <path d="M73 30.500H87M73 35.500H87M73 38.500H87M73 42.500H87M73 45.500H87M73 49.500H87M73 54.500H87M73 59.500H87M88 29.500H92M88 34.500H92M88 38.500H92M88 42.500H92M88 45.500H92M88 49.500H92M88 54.500H92M88 59.500H92" stroke="#000" />
    <path d="M80.500 29V32M80.500 34V37M80.500 38V41M80.500 42V44M80.500 45V48M80.500 49V51M80.500 53V56M80.500 58V61" stroke="#000" strokeWidth="2" />
  </svg>
);

/* ---------- page ---------- */

const menus = ["文件(F)", "编辑(E)", "视图(V)", "工具(T)", "设计(N)", "图表(G)", "调试(D)", "库(L)", "模版(M)", "系统(Y)", "帮助(H)"];

export default function App() {
  return (
    <Desktop>
      <Global />
      <Window>
        <TitleBar>
          <Icon w={30} h={28}>
            <g stroke="#8a93a0" strokeWidth="1.300">
              <ellipse cx="15" cy="14" rx="13" ry="4.500" />
              <ellipse cx="15" cy="14" rx="13" ry="4.500" transform="rotate(58 15 14)" />
              <ellipse cx="15" cy="14" rx="13" ry="4.500" transform="rotate(-58 15 14)" />
            </g>
            <circle cx="15" cy="14" r="6" fill="#2c5088" />
            <circle cx="13" cy="12" r="2" fill="#6a90c0" />
            <g fill="#d8a030"><circle cx="8" cy="3" r="1.800" /><circle cx="22" cy="3" r="1.800" /><circle cx="8" cy="25" r="1.800" /><circle cx="22" cy="25" r="1.800" /></g>
          </Icon>
          <Title>51LED - Proteus 8 Professional - 原理图绘制</Title>
          <Caption aria-label="minimize"><Icon w={16} h={16}><path d="M0 8.500H15" stroke="#000" /></Icon></Caption>
          <Caption aria-label="maximize"><Icon w={16} h={16}><rect x="1" y="1" width="14" height="14" rx="2" stroke="#000" strokeWidth="1.500" /></Icon></Caption>
          <Caption aria-label="close"><Icon w={16} h={16}><path d="M.5 .5L15.500 15.500M15.500 .5L.5 15.500" stroke="#000" strokeWidth="1.400" /></Icon></Caption>
        </TitleBar>

        <MenuBar>{menus.map((m) => <MenuItem key={m}>{m}</MenuItem>)}</MenuBar>

        <ToolRow>
          <Group><Grip $vertical /><Tools items={fileTools} /></Group>
          <Group>
            <Grip $vertical />
            <Combo aria-label="variant"><option>Base Design</option></Combo>
          </Group>
          {toolGroups.map((g) => <Group key={g.name}><Grip $vertical /><Tools items={g.items} /></Group>)}
        </ToolRow>

        <TabRow>
          <Tab>
            <TabOutline width="218" height="40" fill="none"><path d="M0 29.500L29 .5H217.500V40" stroke="#6aa3c2" /></TabOutline>
            <span />
            <Icon w={24} h={30} vb="0 0 32 32"><DiodeCap /></Icon>
            <TabName>原理图绘制</TabName>
            <CloseTab aria-label="close tab"><Icon w={20} h={20}><path d="M2 2L18 18M18 2L2 18" stroke="#6c6c6c" strokeWidth="3.500" /></Icon></CloseTab>
          </Tab>
        </TabRow>

        <Body>
          <Side>
            <SideGroup><Grip /><Tools items={sideTools} side /></SideGroup>
            <SideGroup $top={2}>
              <Grip />
              <Tools items={["cw", "ccw"]} side />
              <Angle aria-label="angle" defaultValue="0°" />
              <Tools items={["|", "flipH", "flipV"]} side />
            </SideGroup>
          </Side>
          <Panels>
            <Overview><MiniMap /></Overview>
            <Devices>
              <DevHead><Pick>P</Pick><Pick>L</Pick><HeadName>EVICES</HeadName></DevHead>
              <List>
                <Item $on>AT89C51</Item>
                <Item>LED-YELLOW</Item>
                <Item>RES</Item>
              </List>
              <Scroll><Thumb /></Scroll>
            </Devices>
          </Panels>
          <CanvasWrap><Canvas><Schematic /></Canvas></CanvasWrap>
        </Body>

        <Status>
          <StatusGroup $w="396px">
            <Grip $vertical />
            <Run aria-label="play"><Icon><path d="M0 .5V31.500L32 16Z" fill="url(#blueV)" /></Icon></Run>
            <Run aria-label="step"><Icon><path d="M0 .5H4.500V31.500H0ZM9 .5V31.500L32 16Z" fill="url(#blueV)" /></Icon></Run>
            <Run aria-label="pause"><Icon><path d="M5 .5H13V31.500H5ZM18 .5H26V31.500H18Z" fill="url(#amber)" stroke="#d0a060" /></Icon></Run>
            <Run aria-label="stop"><Icon><path d="M.5 .5H31.500V31.500H.5Z" fill="url(#blueV)" /></Icon></Run>
            <Split />
            <Messages>
              <Icon>
                <circle cx="16" cy="16" r="15.500" fill="url(#green)" />
                <circle cx="16" cy="7.500" r="3" fill="#fff" />
                <path d="M11 12.500H19V24H22V26.500H11V24H14V15H11Z" fill="#fff" />
              </Icon>
              5 Message(s)
            </Messages>
          </StatusGroup>
          <StatusGroup $w="413px"><Grip $vertical /><Paused>PAUSED: 00:00:09.950000</Paused></StatusGroup>
          <StatusGroup>
            <Grip $vertical />
            <Coords><span>-2800.0</span><span>+2600.0</span><Units>th</Units></Coords>
          </StatusGroup>
          <Mark>CSDN @Kmugi</Mark>
        </Status>
      </Window>
    </Desktop>
  );
}
